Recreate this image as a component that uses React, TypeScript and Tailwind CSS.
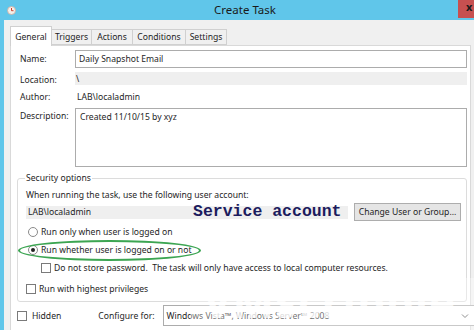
import React from "react";

const font = { fontFamily: '"Noto Sans", "Open Sans", sans-serif' };

function Radio({ checked }: { checked?: boolean }) {
  return (
    <span className="w-[10px] h-[10px] rounded-full border border-[#8a8a8a] bg-white flex items-center justify-center shrink-0">
      {checked && <span className="w-[4px] h-[4px] rounded-full bg-[#222]" />}
    </span>
  );
}

function Check() {
  return <span className="w-[10px] h-[10px] border border-[#7a7a7a] bg-white shrink-0" />;
}

export default function App() {
  return (
    <div
      className="w-[474px] h-[330px] overflow-hidden relative bg-[#f0f0f0] text-[8.6px] text-[#1e1e1e] leading-[12px] whitespace-nowrap"
      style={font}
    >
      {/* Title bar */}
      <div className="h-[20px] bg-[#60c6ea] flex items-start relative">
        <div className="w-[22px] h-[20px] flex items-center justify-center shrink-0">
          <svg width="9" height="9" viewBox="0 0 9 9">
            <circle cx="4.5" cy="4.5" r="4" fill="#f4f0ea" stroke="#c9a9a0" strokeWidth="0.8" />
            <path d="M4.5 2 V4.7 H6.5" stroke="#d04030" strokeWidth="1" fill="none" />
          </svg>
        </div>
        <div className="flex-1 text-center text-[11.5px] leading-[20px] text-[#1a1a1a] pl-[10px]">Create Task</div>
        <div className="w-[16px] h-[18px] shrink-0 bg-[#c75050] text-[#1a1a1a] text-[11px] leading-[14px] pl-[8px] font-bold">x</div>
      </div>

      <div className="flex h-[310px]">
        <div className="w-[4px] shrink-0 bg-[#60c6ea]" />
        <div className="flex-1 min-w-0 pl-[6px] pt-[6px] flex flex-col">
          {/* Tabs */}
          <div className="flex items-start h-[19px] relative z-10">
            <div className="w-[42px] h-[20px] bg-white border border-[#d0d0d0] border-b-0 flex items-center justify-center">General</div>
            <div className="w-[40px] h-[16px] mt-[3px] bg-[#f0f0f0] border border-[#d0d0d0] border-l-0 flex items-center justify-center">Triggers</div>
            <div className="w-[41px] h-[16px] mt-[3px] bg-[#f0f0f0] border border-[#d0d0d0] border-l-0 flex items-center justify-center">Actions</div>
            <div className="w-[53px] h-[16px] mt-[3px] bg-[#f0f0f0] border border-[#d0d0d0] border-l-0 flex items-center justify-center">Conditions</div>
            <div className="w-[41px] h-[16px] mt-[3px] bg-[#f0f0f0] border border-[#d0d0d0] border-l-0 flex items-center justify-center">Settings</div>
          </div>

          {/* Panel */}
          <div className="flex-1 min-w-0 bg-white border border-[#d9d9d9] border-b-0 mr-[3px] pl-[6px] pr-[3px] flex flex-col">
            <div className="flex items-center mt-[4px] h-[18px]">
              <div className="w-[58px] shrink-0 pl-[3px]">Name:</div>
              <div className="flex-1 h-[18px] border border-[#acacac] px-[3px] flex items-center">Daily Snapshot Email</div>
            </div>
            <div className="flex items-center mt-[4px] h-[13px]">
              <div className="w-[58px] shrink-0 pl-[3px] pt-[3px]">Location:</div>
              <div className="flex-1 h-[13px] bg-[#efefef] pl-[1px] flex items-center">\</div>
            </div>
            <div className="flex items-center mt-[5px] h-[14px]">
              <div className="w-[58px] shrink-0 pl-[3px]">Author:</div>
              <div className="pl-[2px]">LAB\localadmin</div>
            </div>
            <div className="flex items-start mt-[4px]">
              <div className="w-[58px] shrink-0 pl-[3px] pt-[2px]">Description:</div>
              <div className="flex-1 h-[59px] border border-[#acacac] px-[4px] pt-[2px]">Created 11/10/15 by xyz</div>
            </div>

            {/* Security options */}
            <div className="mt-[11px] h-[124px] border border-[#dcdcdc] rounded-[3px] relative pl-[8px] pt-[10px]">
              <div className="absolute top-[-7px] left-[7px] bg-white px-[1px]">Security options</div>
              <div>When running the task, use the following user account:</div>
              <div className="flex items-center mt-[2px] h-[18px]">
                <div className="w-[322px] shrink-0 h-[13px] bg-[#efefef] pl-[2px] flex items-center">LAB\localadmin</div>
                <div className="ml-[6px] w-[107px] shrink-0 h-[18px] border border-[#adadad] bg-[#e5e5e5] flex items-center justify-center">Change User or Group...</div>
              </div>
              <div className="flex items-center gap-[3px] mt-[5px] h-[12px] pl-[2px]">
                <Radio />
                <span>Run only when user is logged on</span>
              </div>
              <div className="flex items-center gap-[3px] mt-[6px] h-[12px] pl-[2px]">
                <Radio checked />
                <span>Run whether user is logged on or not</span>
              </div>
              <div className="flex items-center gap-[3px] mt-[6px] h-[12px] pl-[15px]">
                <Check />
                <span>Do not store password.&nbsp; The task will only have access to local computer resources.</span>
              </div>
              <div className="flex items-center gap-[3px] mt-[9px] h-[12px]">
                <Check />
                <span>Run with highest privileges</span>
              </div>
            </div>

            {/* Bottom row */}
            <div className="flex items-center mt-[3px] h-[21px]">
              <Check />
              <span className="ml-[5px]">Hidden</span>
              <span className="ml-[37px] shrink-0">Configure for:</span>
              <div className="ml-[8px] w-[312px] shrink-0 h-[21px] border border-[#acacac] bg-white pl-[3px] flex items-center justify-between">
                <span>Windows Vista™, Windows Server™ 2008</span>
                <svg width="8" height="6" viewBox="0 0 8 6" className="mr-[5px]">
                  <path d="M1 1.5 L4 4.5 L7 1.5" stroke="#555" strokeWidth="1" fill="none" />
                </svg>
              </div>
            </div>
          </div>
        </div>
      </div>

      {/* Annotations */}
      <div
        className="absolute left-[193px] top-[202px] text-[16.5px] leading-[20px] font-bold text-[#1c1c5e]"
        style={{ fontFamily: '"Liberation Mono", "DejaVu Sans Mono", monospace' }}
      >
        Service account
      </div>
      <div className="absolute left-[18px] top-[240px] w-[183px] h-[21px] rounded-[50%] border-2 border-[#3ca552]" />

      {/* Watermark */}
      <div className="absolute left-[190px] top-[278px] w-[290px] h-[60px] bg-white/35" />
      <div
        className="absolute left-[203px] top-[275px] text-[44px] leading-[52px] font-bold text-white/75 tracking-[1px]"
        style={{ fontFamily: '"Open Sans", sans-serif' }}
      >
        VMscribble
      </div>
    </div>
  );
}
